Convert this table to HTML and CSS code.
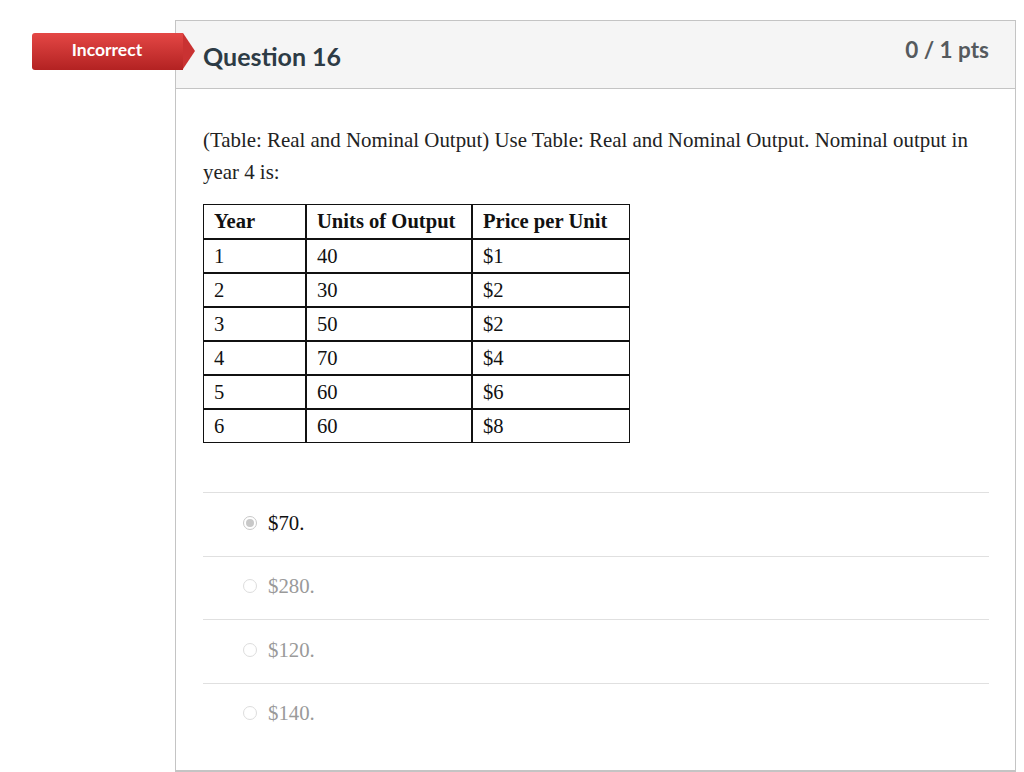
FILE: index.html
```html
<!DOCTYPE html>
<html>
<head>
<meta charset="utf-8">
<link rel="stylesheet" href="styles.css">
</head>
<body>
<div class="page">
  <div class="badge">Incorrect</div>
  <div class="card">
    <div class="card-header">
      <h2 class="q-title">Question 16</h2>
      <div class="pts">0 / 1 pts</div>
    </div>
    <div class="card-body">
      <p class="q-text">(Table: Real and Nominal Output) Use Table: Real and Nominal Output. Nominal output in year 4 is:</p>
      <table class="data">
        <tr><th class="c1">Year</th><th class="c2">Units of Output</th><th class="c3">Price per Unit</th></tr>
        <tr><td>1</td><td>40</td><td>$1</td></tr>
        <tr><td>2</td><td>30</td><td>$2</td></tr>
        <tr><td>3</td><td>50</td><td>$2</td></tr>
        <tr><td>4</td><td>70</td><td>$4</td></tr>
        <tr><td>5</td><td>60</td><td>$6</td></tr>
        <tr><td>6</td><td>60</td><td>$8</td></tr>
      </table>
      <div class="answers">
        <div class="answer selected"><span class="radio checked"></span><span class="a-text">$70.</span></div>
        <div class="answer"><span class="radio"></span><span class="a-text">$280.</span></div>
        <div class="answer"><span class="radio"></span><span class="a-text">$120.</span></div>
        <div class="answer"><span class="radio"></span><span class="a-text">$140.</span></div>
      </div>
    </div>
  </div>
</div>
</body>
</html>
```
FILE: styles.css
```css
html, body {
  margin: 0;
  padding: 0;
  background: #fff;
}
.page {
  position: relative;
  padding: 20px 8px 0 175px;
}
.badge {
  position: absolute;
  left: 32px;
  top: 33px;
  width: 151px;
  height: 37px;
  background: linear-gradient(#e44745, #b32222);
  border-radius: 3px 0 0 3px;
  color: #fff;
  font-family: Lato, sans-serif;
  font-weight: bold;
  font-size: 17.5px;
  line-height: 33px;
  text-align: center;
  box-sizing: border-box;
  padding-right: 1px;
  z-index: 2;
}
.badge::after {
  content: "";
  position: absolute;
  right: -12px;
  top: 0;
  border-top: 18.5px solid transparent;
  border-bottom: 18.5px solid transparent;
  border-left: 12px solid #c93232;
}
.card {
  border: 1px solid #c4c4c4;
  border-bottom: 2px solid #c4c4c4;
  height: 752px;
  box-sizing: border-box;
}
.card-header {
  background: #f5f5f5;
  border-bottom: 1px solid #c4c4c4;
  height: 68px;
  box-sizing: border-box;
  display: flex;
  justify-content: space-between;
  padding: 0 26px 0 27px;
  font-family: Lato, sans-serif;
}
.q-title {
  margin: 0;
  padding-top: 19px;
  font-size: 25px;
  font-weight: bold;
  color: #2d3b45;
  line-height: 32px;
}
.pts {
  padding-top: 13px;
  font-size: 22.5px;
  font-weight: bold;
  color: #555a5e;
  line-height: 32px;
}
.card-body {
  padding: 35px 26px 0 27px;
  font-family: "Liberation Serif", "Times New Roman", serif;
  color: #000;
}
.q-text {
  margin: 0 0 16px 0;
  font-size: 20.9px;
  line-height: 32px;
  color: #222;
}
.data {
  border-collapse: separate;
  border-spacing: 0;
  font-size: 20.6px;
}
.data th, .data td {
  border: 1px solid #111;
  text-align: left;
  padding: 0 10px;
  height: 32px;
  font-weight: normal;
  color: #111;
}
.data tr:first-child th {
  height: 33px;
}
.data th {
  font-weight: bold;
}
.c1 { width: 81px; }
.c2 { width: 144px; }
.c3 { width: 136px; }
.answers {
  margin-top: 49px;
}
.answer {
  border-top: 1px solid #e0e0e0;
  height: 63.5px;
  display: flex;
  align-items: center;
  padding-left: 40px;
  gap: 11px;
  font-size: 20.8px;
  color: #9a9a9a;
  padding-bottom: 3px;
  box-sizing: border-box;
}
.answer.selected {
  color: #111;
}
.radio {
  width: 14px;
  height: 14px;
  border-radius: 50%;
  border: 1px solid #ddd;
  box-sizing: border-box;
  background: #fff;
  position: relative;
}
.radio.checked {
  border-color: #c8c8c8;
}
.radio.checked::after {
  content: "";
  position: absolute;
  left: 2px;
  top: 2px;
  width: 8px;
  height: 8px;
  border-radius: 50%;
  background: #c8c8c8;
}
```
